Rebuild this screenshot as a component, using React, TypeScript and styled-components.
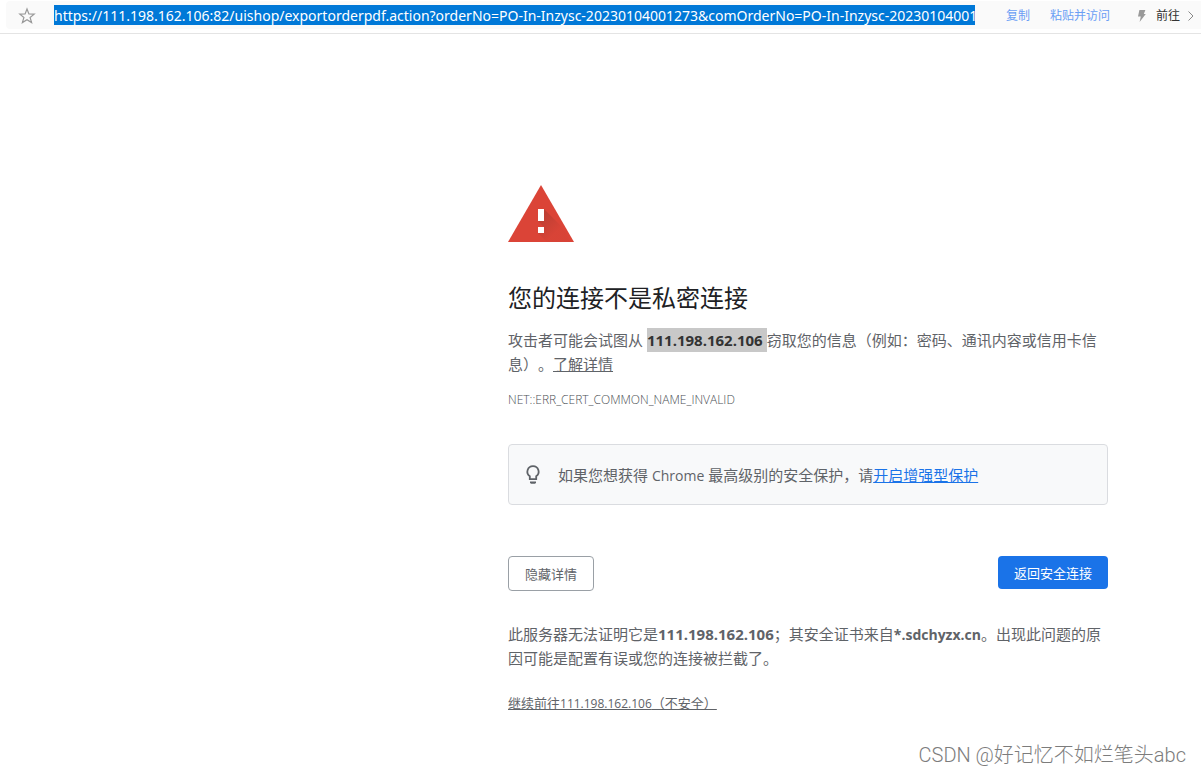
import React from "react";
import styled, { createGlobalStyle } from "styled-components";

const GlobalStyle = createGlobalStyle`
  *, *::before, *::after { box-sizing: border-box; }
  body {
    margin: 0;
    background: #fff;
    color: #5f6368;
    font-family: "Open Sans", "Noto Sans CJK SC", sans-serif;
    font-size: 15px;
    line-height: 24px;
    text-spacing-trim: space-all;
  }
`;

const Page = styled.div`
  display: flex;
  flex-direction: column;
  min-height: 100vh;
`;

const TopBar = styled.header`
  padding: 1px 0 4px 6px;
  border-bottom: 1px solid #e4e4e4;
`;

const AddressBar = styled.form`
  display: flex;
  align-items: center;
  height: 28px;
  padding: 0 7px 0 12px;
  border-radius: 4px 0 0 4px;
  background: #fafafa;
`;

const BarButton = styled.button<{ $tone?: "link" | "dark" }>`
  display: flex;
  align-items: center;
  flex: none;
  padding: 1px 0 0;
  border: 0;
  background: none;
  font: inherit;
  font-size: 12px;
  line-height: 20px;
  white-space: nowrap;
  color: ${(p) => (p.$tone === "dark" ? "#333" : "#6a9ff5")};
  cursor: pointer;
`;

const UrlInput = styled.input`
  flex: 1;
  min-width: 0;
  height: 20px;
  margin: 0 31px 0 18px;
  padding: 1px 0 0;
  border: 0;
  outline: 0;
  background: #0078d7;
  color: #fff;
  font: inherit;
  font-family: "Noto Sans", sans-serif;
  font-size: 14px;
  line-height: 19px;
`;

const BarActions = styled.div`
  display: flex;
  align-items: center;
  gap: 20px;
`;

const GoGroup = styled(BarButton)`
  gap: 8px;
  margin-left: 6px;
`;

const Columns = styled.main`
  flex: 1;
  display: grid;
  grid-template-columns: minmax(24px, 508fr) minmax(0, 600px) minmax(24px, 93fr);
`;

const Interstitial = styled.article`
  grid-column: 2;
  padding-top: 151px;
`;

const WarningIcon = styled.svg`
  display: block;
  width: 66px;
  height: 58px;
`;

const Title = styled.h1`
  margin: 39px 0 14px;
  color: #202124;
  font-size: 24px;
  font-weight: 400;
  line-height: 32px;
`;

const Paragraph = styled.p`
  margin: 0;
`;

const TextLink = styled.a<{ $accent?: boolean }>`
  color: ${(p) => (p.$accent ? "#1a73e8" : "inherit")};
  text-decoration: underline;
`;

const SelectedHost = styled.strong`
  padding: 2px 4px 2px 0;
  background: #c8c8c8;
  color: #333;
`;

const ErrorCode = styled.p`
  margin: 12px 0 0;
  color: #4c5055;
  font-size: 12px;
  font-weight: 300;
`;

const Suggestion = styled.section`
  display: flex;
  align-items: center;
  gap: 16px;
  min-height: 61px;
  margin-top: 32px;
  padding: 0 16px 0 15px;
  border: 1px solid #dadce0;
  border-radius: 4px;
  background: #f8f9fa;
`;

const BulbIcon = styled.svg`
  flex: none;
  width: 18px;
  height: 24px;
`;

const ButtonRow = styled.div`
  display: flex;
  justify-content: space-between;
  align-items: flex-start;
  margin: 51px 0 31px;
`;

const ActionButton = styled.button<{ $primary?: boolean }>`
  height: ${(p) => (p.$primary ? "33px" : "35px")};
  padding: 0 16px;
  border: ${(p) => (p.$primary ? "0" : "1px solid #9aa0a6")};
  border-radius: 4px;
  background: ${(p) => (p.$primary ? "#1a73e8" : "#fff")};
  color: ${(p) => (p.$primary ? "#fff" : "#5f6368")};
  font: inherit;
  font-size: 13px;
  cursor: pointer;
`;

const Proceed = styled.p`
  margin: 21px 0 0;
  font-size: 13px;
`;

const SmallHost = styled.span`
  font-size: 12px;
  line-height: 20px;
`;

const LatinWord = styled.span`
  font-size: 14px;
  line-height: 20px;
`;

const Watermark = styled.footer`
  padding: 0 15px 7px;
  color: #7c7c7c;
  font-family: Roboto, "Noto Sans CJK SC", sans-serif;
  font-size: 20px;
  font-weight: 300;
  text-align: right;
`;

const HOST = "111.198.162.106";
const URL_TEXT = `https://${HOST}:82/uishop/exportorderpdf.action?orderNo=PO-In-Inzysc-20230104001273&comOrderNo=PO-In-Inzysc-20230104001273`;

export default function App() {
  return (
    <Page>
      <GlobalStyle />
      <TopBar>
        <AddressBar onSubmit={(e) => e.preventDefault()}>
          <BarButton type="button" aria-label="收藏">
            <svg width="18" height="18" viewBox="0 0 18 18" fill="none" stroke="#999" strokeWidth="1.2" strokeLinejoin="miter">
              <path d="M9 2 L10.9 6.9 L16.2 7.1 L12.1 10.5 L13.6 15.6 L9 12.7 L4.4 15.6 L5.9 10.5 L1.8 7.1 L7.1 6.9 Z" />
            </svg>
          </BarButton>
          <UrlInput type="text" aria-label="地址" readOnly value={URL_TEXT} />
          <BarActions>
            <BarButton type="button">复制</BarButton>
            <BarButton type="button">粘贴并访问</BarButton>
            <GoGroup type="submit" $tone="dark">
              <svg width="12" height="14" viewBox="0 0 12 14" fill="#999">
                <path d="M3.4 1 H9.4 L7.8 5 H9.8 L3.6 13 L4.8 7.6 H2 Z" />
              </svg>
              前往
              <svg width="6" height="10" viewBox="0 0 6 10" fill="none" stroke="#888" strokeWidth="1">
                <path d="M0.5 0.5 L5 5 L0.5 9.5" />
              </svg>
            </GoGroup>
          </BarActions>
        </AddressBar>
      </TopBar>

      <Columns>
        <Interstitial>
          <WarningIcon viewBox="0 0 66 58" aria-hidden="true">
            <defs>
              <linearGradient id="shade" gradientUnits="userSpaceOnUse" x1="33" y1="30" x2="49" y2="46">
                <stop offset="0" stopColor="#3e2723" stopOpacity="0.2" />
                <stop offset="1" stopColor="#3e2723" stopOpacity="0.02" />
              </linearGradient>
            </defs>
            <path d="M33 0 L66 57 H0 Z" fill="#db4437" />
            <path d="M36 24 L54 42 L62.7 57 H39 L30 48 L36 42 L30 36 Z" fill="url(#shade)" />
            <path d="M30 24 H36 V36 H30 Z M30 42 H36 V48 H30 Z" fill="#fff" />
          </WarningIcon>
          <Title>您的连接不是私密连接</Title>
          <Paragraph>
            攻击者可能会试图从 <SelectedHost>{HOST}</SelectedHost>窃取您的信息（例如：密码、通讯内容或信用卡信息）。
            <TextLink href="#details">了解详情</TextLink>
          </Paragraph>
          <ErrorCode>NET::ERR_CERT_COMMON_NAME_INVALID</ErrorCode>

          <Suggestion>
            <BulbIcon viewBox="0 0 18 24" aria-hidden="true">
              <path
                d="M9 3.1 a5.6 5.6 0 0 0 -3.2 10.2 V16.2 H12.2 V13.3 A5.6 5.6 0 0 0 9 3.1 Z"
                fill="none"
                stroke="#5f6368"
                strokeWidth="1.8"
              />
              <path d="M6 18.4 H12 V19.4 L11.2 20.8 H6.8 L6 19.4 Z" fill="#5f6368" />
            </BulbIcon>
            <Paragraph>
              如果您想获得 <LatinWord>Chrome</LatinWord> 最高级别的安全保护，请
              <TextLink $accent href="#enhanced">开启增强型保护</TextLink>
            </Paragraph>
          </Suggestion>

          <ButtonRow>
            <ActionButton type="button">隐藏详情</ActionButton>
            <ActionButton type="button" $primary>返回安全连接</ActionButton>
          </ButtonRow>

          <Paragraph id="details">
            此服务器无法证明它是<strong>{HOST}</strong>；其安全证书来自<LatinWord as="strong">*.sdchyzx.cn</LatinWord>。出现此问题的原因可能是配置有误或您的连接被拦截了。
          </Paragraph>
          <Proceed>
            <TextLink href="#proceed">
              继续前往<SmallHost>{HOST}</SmallHost>（不安全）
            </TextLink>
          </Proceed>
        </Interstitial>
      </Columns>

      <Watermark>CSDN @好记忆不如烂笔头abc</Watermark>
    </Page>
  );
}
